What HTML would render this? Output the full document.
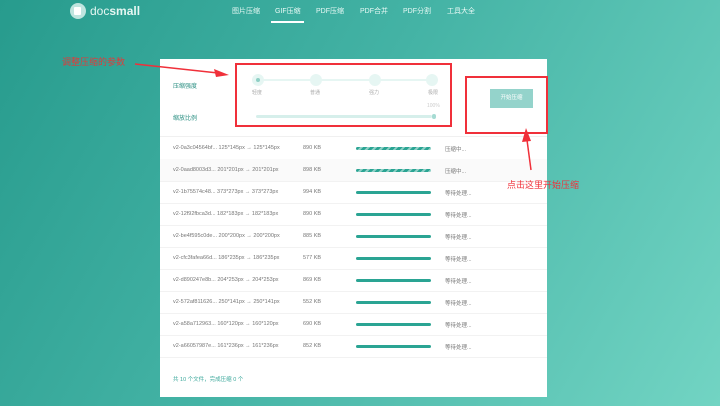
<!DOCTYPE html><html><head><meta charset="utf-8"><style>
body{margin:0;width:720px;height:406px;overflow:hidden;font-family:"Liberation Sans","Noto Sans CJK SC",sans-serif;background:linear-gradient(120deg,#279b8d 0%,#44b3a5 45%,#72d4c3 100%);position:relative}
.a{position:absolute}
.nav span{position:absolute;top:6px;font-size:7px;color:#eafaf6}
.card{left:160px;top:59px;width:387px;height:338px;background:#fff}
.row{position:absolute;left:0;width:387px;height:22px;border-bottom:1px solid #f2f2f2;font-size:5.5px;color:#777}
.row span{position:absolute;top:8px}
.bar{position:absolute;left:196px;top:10px;width:75px;height:3px;background:#2aa493;border-radius:2px}
.lbl{position:absolute;font-size:5px;color:#aaa}
</style></head><body>
<div class="a" style="left:70px;top:3px;width:16px;height:16px;border-radius:50%;background:#bfe5df"></div>
<div class="a" style="left:74px;top:7px;width:7px;height:8px;background:#fff;border-radius:1px"></div>
<div class="a" style="left:90px;top:4px;font-size:12px;color:#e6f7f3">doc<b>small</b></div>
<div class="nav"><span style="left:232px">图片压缩</span><span style="left:275px">GIF压缩</span><span style="left:316px">PDF压缩</span><span style="left:360px">PDF合并</span><span style="left:403px">PDF分割</span><span style="left:447px">工具大全</span></div>
<div class="a" style="left:271px;top:21px;width:33px;height:2px;background:#fff"></div>
<div class="a card">
<div class="a" style="left:13px;top:22px;font-size:6px;color:#2a8f82">压缩强度</div>
<div class="a" style="left:13px;top:54px;font-size:6px;color:#2a8f82">缩放比例</div>
<div class="a" style="left:100px;top:20px;width:175px;height:2px;background:#e6f6f3"></div>
<div class="lbl" style="left:92px;top:30px">轻度</div><div class="lbl" style="left:150px;top:30px">普通</div><div class="lbl" style="left:209px;top:30px">强力</div><div class="lbl" style="left:268px;top:30px">极限</div>
<div class="a" style="left:92px;top:15px;width:12px;height:12px;border-radius:50%;background:#e6f6f3"></div>
<div class="a" style="left:96px;top:19px;width:4px;height:4px;border-radius:50%;background:#8fcfc5"></div>
<div class="a" style="left:150px;top:15px;width:12px;height:12px;border-radius:50%;background:#e6f6f3"></div>
<div class="a" style="left:209px;top:15px;width:12px;height:12px;border-radius:50%;background:#e6f6f3"></div>
<div class="a" style="left:266px;top:15px;width:12px;height:12px;border-radius:50%;background:#e6f6f3"></div>
<div class="a" style="left:267px;top:44px;font-size:5px;color:#ccc">100%</div>
<div class="a" style="left:96px;top:56px;width:176px;height:3px;background:#d6efeb;border-radius:2px"></div>
<div class="a" style="left:272px;top:55px;width:4px;height:5px;border-radius:2px;background:#a6dbd3"></div>
<div class="a" style="left:330px;top:30px;width:43px;height:19px;background:#94d3cb;color:#fff;font-size:5.5px;text-align:center;line-height:19px">开始压缩</div>
<div class="a" style="left:0;top:77px;width:387px;height:1px;background:#f0f0f0"></div>
<div class="row" style="top:78px"><span style="left:13px">v2-0a3c04564bf... 125*145px → 125*145px</span><span style="left:143px">890 KB</span><div class="bar" style="background:repeating-linear-gradient(135deg,#2aa493 0 3px,#8fd0c6 3px 5px)"></div><span style="left:285px">压缩中...</span></div>
<div class="row" style="top:100px;background:#fafafa"><span style="left:13px">v2-0aad8003d3... 201*201px → 201*201px</span><span style="left:143px">898 KB</span><div class="bar" style="background:repeating-linear-gradient(135deg,#2aa493 0 3px,#8fd0c6 3px 5px)"></div><span style="left:285px">压缩中...</span></div>
<div class="row" style="top:122px"><span style="left:13px">v2-1b75574c48... 373*273px → 373*273px</span><span style="left:143px">994 KB</span><div class="bar"></div><span style="left:285px">等待处理...</span></div>
<div class="row" style="top:144px"><span style="left:13px">v2-12f92fbca3d... 182*183px → 182*183px</span><span style="left:143px">890 KB</span><div class="bar"></div><span style="left:285px">等待处理...</span></div>
<div class="row" style="top:166px"><span style="left:13px">v2-be4f595c0de... 200*200px → 200*200px</span><span style="left:143px">885 KB</span><div class="bar"></div><span style="left:285px">等待处理...</span></div>
<div class="row" style="top:188px"><span style="left:13px">v2-cfc3fafea66d... 186*235px → 186*235px</span><span style="left:143px">577 KB</span><div class="bar"></div><span style="left:285px">等待处理...</span></div>
<div class="row" style="top:210px"><span style="left:13px">v2-d890247e8b... 204*253px → 204*253px</span><span style="left:143px">869 KB</span><div class="bar"></div><span style="left:285px">等待处理...</span></div>
<div class="row" style="top:232px"><span style="left:13px">v2-572af811626... 250*141px → 250*141px</span><span style="left:143px">552 KB</span><div class="bar"></div><span style="left:285px">等待处理...</span></div>
<div class="row" style="top:254px"><span style="left:13px">v2-a58a712963... 160*120px → 160*120px</span><span style="left:143px">690 KB</span><div class="bar"></div><span style="left:285px">等待处理...</span></div>
<div class="row" style="top:276px"><span style="left:13px">v2-a66057987e... 161*236px → 161*236px</span><span style="left:143px">852 KB</span><div class="bar"></div><span style="left:285px">等待处理...</span></div>
<div class="a" style="left:13px;top:316px;font-size:5.5px;color:#3aa79a">共 10 个文件，完成压缩 0 个</div>
</div>
<div class="a" style="left:235px;top:63px;width:213px;height:60px;border:2px solid #f0303a"></div>
<div class="a" style="left:465px;top:76px;width:79px;height:54px;border:2px solid #f0303a"></div>
<div class="a" style="left:62px;top:55px;font-size:9px;color:#e03a3a">调整压缩的参数</div>
<div class="a" style="left:507px;top:178px;font-size:9px;color:#f0303a">点击这里开始压缩</div>
<svg class="a" style="left:0;top:0" width="720" height="406"><path d="M135 64 L218 73" stroke="#f0303a" stroke-width="1.5"/><path d="M229 75 L214 69 L216 77Z" fill="#f0303a"/><path d="M531 170 L527 140" stroke="#f0303a" stroke-width="1.5"/><path d="M526 128 L522 142 L531 141Z" fill="#f0303a"/></svg>
</body></html>
